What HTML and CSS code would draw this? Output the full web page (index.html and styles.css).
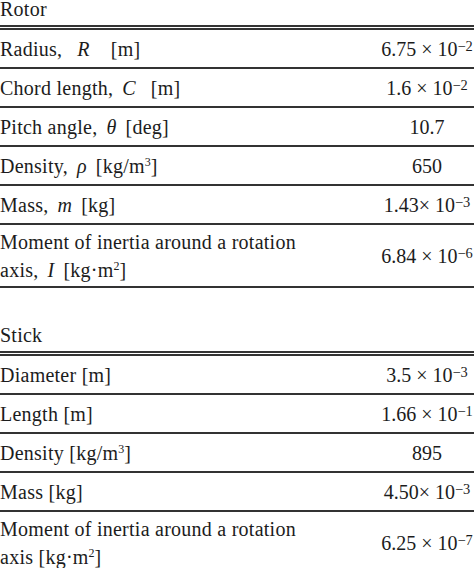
FILE: index.html
```html
<!DOCTYPE html>
<html>
<head>
<meta charset="utf-8">
<link rel="stylesheet" href="styles.css">
</head>
<body>
<div class="page">
  <section class="group">
    <div class="heading">Rotor</div>
    <div class="table">
      <div class="row"><div class="label">Radius,<span class="gap2"></span><i class="sym">R</i><span class="gap3"></span>[m]</div><div class="value"><span class="num">6.75 × 10<sup>−2</sup></span></div></div>
      <div class="row"><div class="label">Chord length,<span class="gap1"></span><i class="sym">C</i><span class="gap2"></span>[m]</div><div class="value"><span class="num">1.6 × 10<sup>−2</sup></span></div></div>
      <div class="row"><div class="label">Pitch angle,<span class="gap1"></span><i class="sym">θ</i><span class="gap1"></span>[deg]</div><div class="value"><span class="num">10.7</span></div></div>
      <div class="row"><div class="label">Density,<span class="gap1"></span><i class="sym">ρ</i><span class="gap1"></span>[kg/m<sup class="unit">3</sup>]</div><div class="value"><span class="num">650</span></div></div>
      <div class="row"><div class="label">Mass,<span class="gap1"></span><i class="sym">m</i><span class="gap1"></span>[kg]</div><div class="value"><span class="num">1.43× 10<sup>−3</sup></span></div></div>
      <div class="row tall"><div class="label">Moment of inertia around a rotation<br>axis,<span class="gap1"></span><i class="sym">I</i><span class="gap1"></span>[kg·m<sup class="unit">2</sup>]</div><div class="value"><span class="num">6.84 × 10<sup>−6</sup></span></div></div>
    </div>
  </section>
  <section class="group second">
    <div class="heading">Stick</div>
    <div class="table">
      <div class="row"><div class="label">Diameter [m]</div><div class="value"><span class="num">3.5 × 10<sup>−3</sup></span></div></div>
      <div class="row"><div class="label">Length [m]</div><div class="value"><span class="num">1.66 × 10<sup>−1</sup></span></div></div>
      <div class="row"><div class="label">Density [kg/m<sup class="unit">3</sup>]</div><div class="value"><span class="num">895</span></div></div>
      <div class="row"><div class="label">Mass [kg]</div><div class="value"><span class="num">4.50× 10<sup>−3</sup></span></div></div>
      <div class="row tall"><div class="label">Moment of inertia around a rotation<br>axis [kg·m<sup class="unit">2</sup>]</div><div class="value"><span class="num">6.25 × 10<sup>−7</sup></span></div></div>
    </div>
  </section>
</div>
</body>
</html>
```
FILE: styles.css
```css
html, body {
  margin: 0;
  padding: 0;
  background: #ffffff;
}
body {
  width: 474px;
  height: 568px;
  overflow: hidden;
  font-family: "Liberation Serif", "Times New Roman", serif;
  font-size: 20px;
  color: #1c1c1c;
}
.page {
  display: flex;
  flex-direction: column;
}
.group.second {
  margin-top: 38px;
}
.heading {
  line-height: 18px;
  padding-bottom: 7px;
  letter-spacing: 0.25px;
}
.table {
  border-top: 5px double #333333;
}
.row {
  display: flex;
  border-bottom: 2px solid #333333;
}
.label {
  flex: 1;
  line-height: 28px;
  padding: 5px 0 4px;
  letter-spacing: 0.25px;
}
.row.tall .label {
  padding: 3px 0 2px;
}
.value {
  width: 94px;
  display: flex;
  justify-content: center;
  align-items: center;
}
.num {
  white-space: nowrap;
  line-height: 28px;
}
.sym {
  font-style: italic;
}
.gap1 { display: inline-block; width: 9px; }
.gap2 { display: inline-block; width: 15px; }
.gap3 { display: inline-block; width: 21px; }
sup {
  font-size: 0.72em;
  line-height: 0;
  vertical-align: 5px;
  letter-spacing: 0;
}
sup.unit {
  font-size: 0.6em;
  vertical-align: 7px;
}
```
